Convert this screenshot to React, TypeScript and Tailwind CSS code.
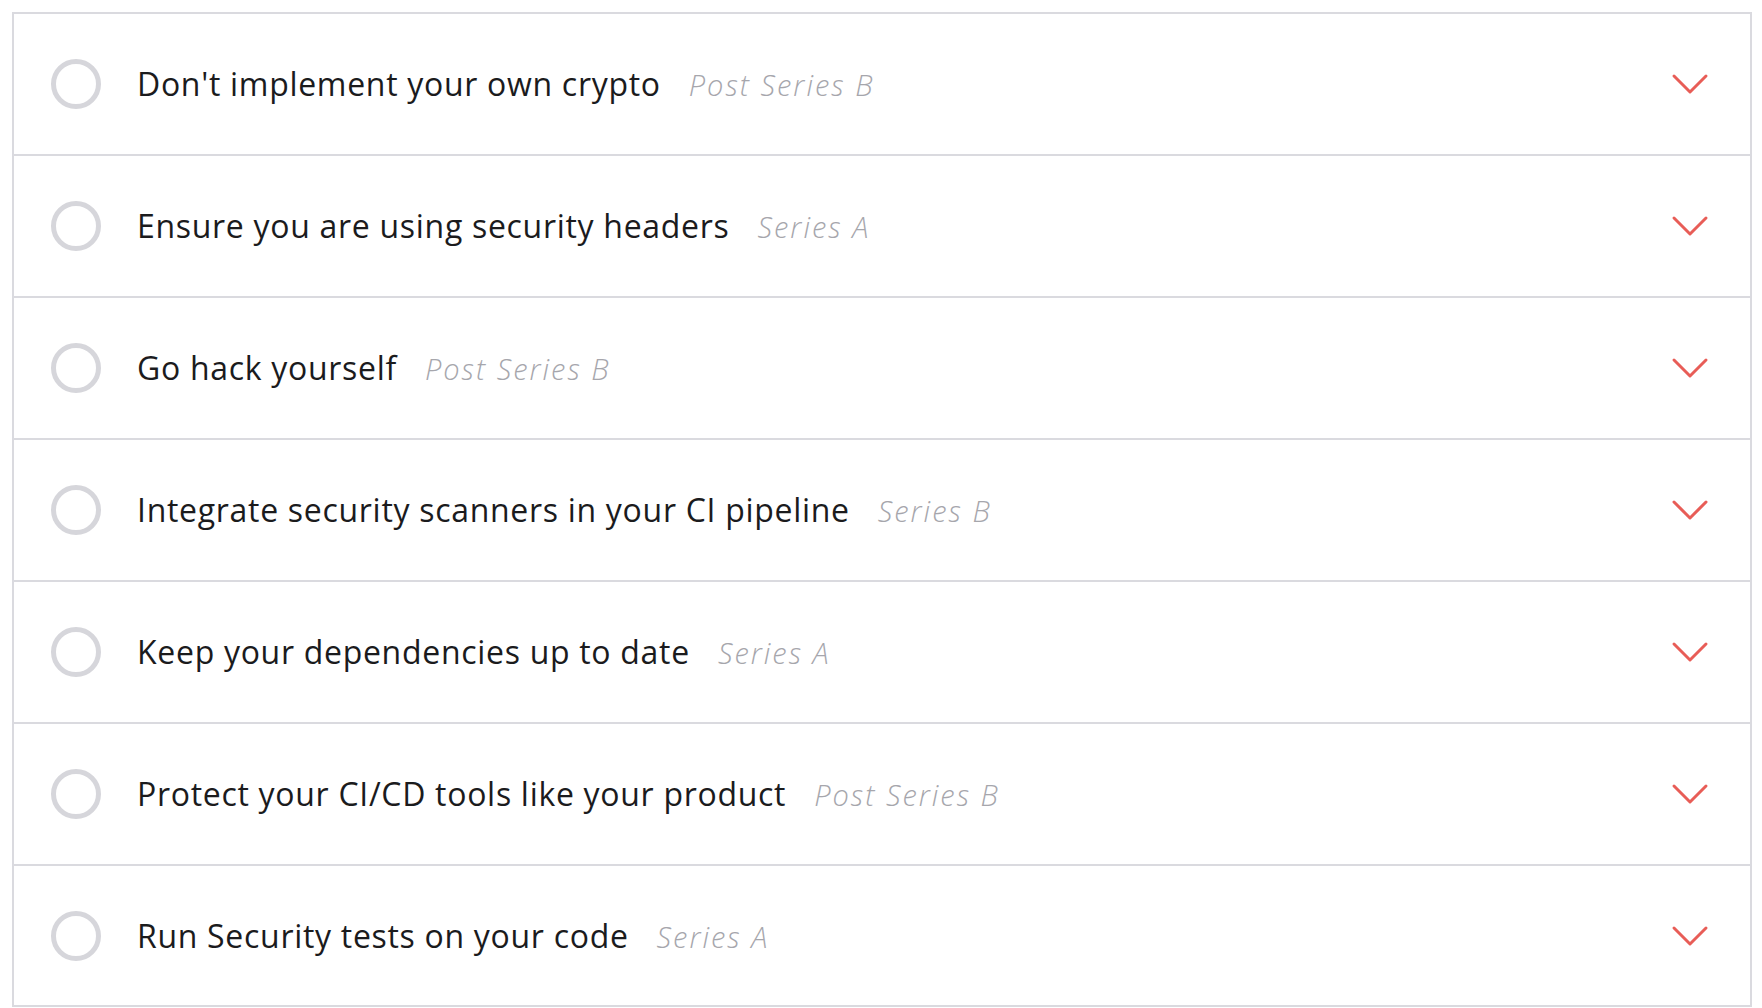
const items = [
  { title: "Don't implement your own crypto", tag: "Post Series B" },
  { title: "Ensure you are using security headers", tag: "Series A" },
  { title: "Go hack yourself", tag: "Post Series B" },
  { title: "Integrate security scanners in your CI pipeline", tag: "Series B" },
  { title: "Keep your dependencies up to date", tag: "Series A" },
  { title: "Protect your CI/CD tools like your product", tag: "Post Series B" },
  { title: "Run Security tests on your code", tag: "Series A" },
];

function Chevron() {
  return (
    <svg width="38" height="24" viewBox="0 0 38 24" fill="none" className="shrink-0">
      <path d="M3 4 L19 20 L35 4" stroke="#e85d57" strokeWidth="3" strokeLinecap="round" strokeLinejoin="round" />
    </svg>
  );
}

function Row({ title, tag, last }: { title: string; tag: string; last: boolean }) {
  return (
    <div
      className={`flex items-center pl-[37px] pr-[41px] ${last ? "h-[139px]" : "h-[142px] border-b-2 border-[#dadadf]"}`}
    >
      <div className="h-[50px] w-[50px] shrink-0 rounded-full border-[5px] border-[#d6d6db]" />
      <div className="ml-[36px] flex flex-1 items-baseline">
        <span className="text-[32px] tracking-[0.7px] text-[#1b1b1d]">{title}</span>
        <span className="ml-[28px] text-[29px] font-light italic tracking-[2px] text-[#a6a6ac]">{tag}</span>
      </div>
      <Chevron />
    </div>
  );
}

export default function App() {
  return (
    <div className="min-h-screen bg-white p-[12px]" style={{ fontFamily: "'Open Sans', 'Noto Sans', sans-serif" }}>
      <div className="w-[1740px] border-2 border-[#dadadf]">
        {items.map((it, i) => (
          <Row key={it.title} title={it.title} tag={it.tag} last={i === items.length - 1} />
        ))}
      </div>
    </div>
  );
}
